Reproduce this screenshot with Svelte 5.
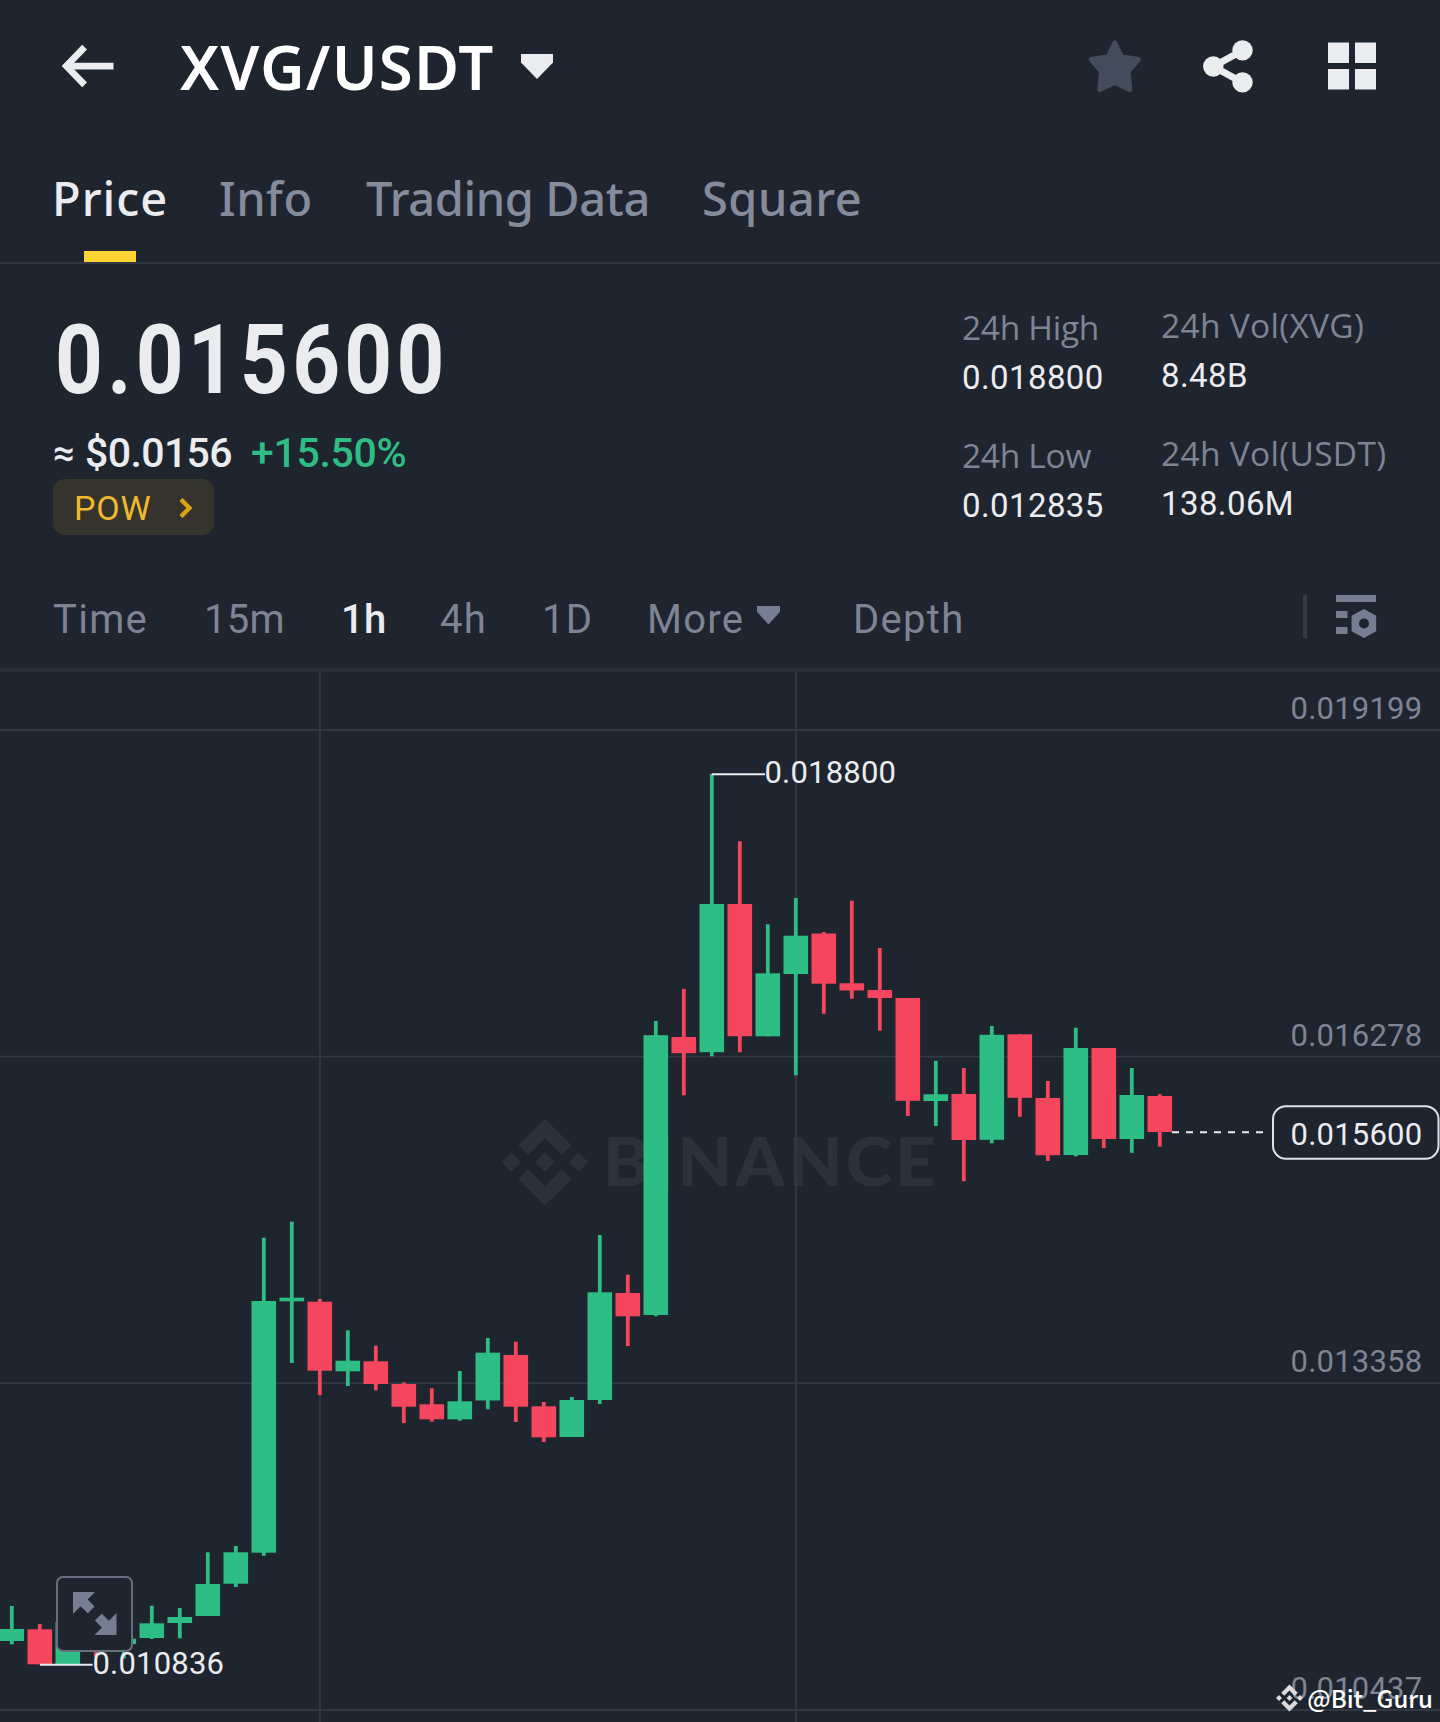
<script lang="ts">
	type Direction = 'up' | 'down';
	// direction, wick top, body top, body bottom, wick bottom
	type Candle = [Direction, number, number, number, number];

	const tabs = ['Price', 'Info', 'Trading Data', 'Square'];
	const intervals = ['Time', '15m', '1h', '4h', '1D'];

	let activeTab = $state('Price');
	let activeInterval = $state('1h');

	const stats = [
		[
			{ label: '24h High', value: '0.018800' },
			{ label: '24h Low', value: '0.012835' }
		],
		[
			{ label: '24h Vol(XVG)', value: '8.48B' },
			{ label: '24h Vol(USDT)', value: '138.06M' }
		]
	];

	const CHART_TOP = 672;
	const STEP = 28;
	const FIRST_X = 11.8;
	const BODY_WIDTH = 24.6;

	const gridX = [320, 796];
	const gridY = [
		{ y: 730, label: '0.019199' },
		{ y: 1056.7, label: '0.016278' },
		{ y: 1383.2, label: '0.013358' },
		{ y: 1710, label: '0.010437' }
	];

	const candles: Candle[] = [
		['up', 1606, 1629, 1641, 1644.3],
		['down', 1624, 1629.3, 1664.3, 1664.3],
		['up', 1620.7, 1622, 1664, 1664],
		['down', 1640, 1644, 1650, 1656.5],
		['up', 1630, 1638.7, 1644, 1658.5],
		['up', 1605.7, 1623.3, 1638, 1639],
		['up', 1608, 1617, 1623, 1638.3],
		['up', 1552.3, 1584, 1616, 1616],
		['up', 1546, 1552.3, 1583.7, 1587],
		['up', 1237.7, 1301, 1552.7, 1555.8],
		['up', 1221.7, 1297.7, 1301.3, 1363],
		['down', 1299, 1301.7, 1370.7, 1395],
		['up', 1330.3, 1360.7, 1371.3, 1386],
		['down', 1345.7, 1361.3, 1384, 1390.3],
		['down', 1382.5, 1384, 1406.7, 1423],
		['down', 1388.3, 1404.3, 1419.3, 1421.7],
		['up', 1371, 1401.3, 1419.3, 1420.7],
		['up', 1338, 1352.7, 1400.5, 1409.3],
		['down', 1341.7, 1355, 1406.7, 1422],
		['down', 1402, 1406.3, 1437.3, 1442],
		['up', 1397, 1400, 1437, 1437],
		['up', 1235, 1292.3, 1400, 1404],
		['down', 1274.7, 1293, 1316.3, 1346],
		['up', 1021, 1035.2, 1315, 1316.3],
		['down', 989, 1037, 1053.2, 1095.3],
		['up', 774, 904, 1052.2, 1056.3],
		['down', 841.3, 904, 1036.2, 1052.3],
		['up', 924.3, 973.3, 1036.3, 1036.3],
		['up', 898, 935.7, 974, 1075.3],
		['down', 932, 933.5, 983.7, 1013.7],
		['down', 900.7, 983.3, 990.5, 998.7],
		['down', 948, 990, 998, 1030.7],
		['down', 998, 998, 1100.8, 1116],
		['up', 1060.8, 1094.3, 1101, 1126],
		['down', 1068, 1094, 1140, 1181.2],
		['up', 1026, 1034.8, 1139.8, 1143.3],
		['down', 1034.3, 1034.3, 1097.8, 1116.8],
		['down', 1081, 1098, 1155.2, 1161],
		['up', 1027.8, 1048, 1155, 1156.3],
		['down', 1048, 1048, 1139, 1148.2],
		['up', 1068, 1095, 1139, 1152.8],
		['down', 1094.2, 1096, 1132, 1146.5]
	];

	const centerX = (index: number) => FIRST_X + STEP * index;
</script>

{#snippet logo()}
	<path d="M43.3 0 69.8 26.4 60 36 43.3 19.4 26.6 36 16.8 26.4Z" />
	<path d="M43.3 86.6 69.8 60.2 60 50.6 43.3 67.2 26.6 50.6 16.8 60.2Z" />
	<path d="M43.3 33.7 52.9 43.3 43.3 52.9 33.7 43.3Z" />
	<path d="M9.7 33.6 19.3 43.3 9.7 53 0 43.3Z" />
	<path d="M76.9 33.6 86.6 43.3 76.9 53 67.3 43.3Z" />
{/snippet}

<main class="screen">
	<header class="topbar">
		<button class="icon-button" aria-label="Back">
			<svg width="54" height="44" viewBox="0 0 54 44" fill="none" stroke="#eaecef" stroke-width="6.8">
				<path d="M23.6 3.2 5.4 22 23.6 40.8" />
				<path d="M6 22.2H52.5" />
			</svg>
		</button>
		<button class="pair">
			<span class="pair-name">XVG/USDT</span>
			<svg class="pair-caret" width="32" height="25" viewBox="0 0 32 25">
				<path d="M0 0H32V8.4L16 25 0 8.4Z" fill="#eaecef" />
			</svg>
		</button>
		<div class="actions">
			<button class="icon-button" aria-label="Favorite">
				<svg width="54" height="53" viewBox="0 0 54 53">
					<path
						d="M26.8 2.8 33.3 16.8 50.4 19.4 40.2 31.4 41.7 49.6 26.8 42.4 11.9 49.6 13.4 31.4 3.2 19.4 20.3 16.8Z"
						fill="#434c5a"
						stroke="#434c5a"
						stroke-width="5"
						stroke-linejoin="round"
					/>
				</svg>
			</button>
			<button class="icon-button share" aria-label="Share">
				<svg width="50" height="53" viewBox="0 0 50 53" fill="#eaecef">
					<path d="M39.5 10.5 10.3 26.5 39.5 42.5" fill="none" stroke="#eaecef" stroke-width="7" />
					<circle cx="10.3" cy="26.5" r="10.2" />
					<circle cx="39.5" cy="10.4" r="10.2" />
					<circle cx="39.5" cy="42.4" r="10.2" />
				</svg>
			</button>
			<button class="icon-button" aria-label="Menu">
				<svg width="48" height="48" viewBox="0 0 48 48" fill="#eaecef">
					<path d="M0 .6H21V21H0ZM27 .6H48V21H27ZM0 27H21V47.4H0ZM27 27H48V47.4H27Z" />
				</svg>
			</button>
		</div>
	</header>

	<nav class="tabs">
		{#each tabs as tab}
			<button class="tab" class:active={tab === activeTab} onclick={() => (activeTab = tab)}>
				{tab}
			</button>
		{/each}
	</nav>

	<section class="summary">
		<div class="quote">
			<div class="last-price">0.015600</div>
			<div class="fiat">
				<span class="approx">≈</span>
				<span class="usd">$0.0156</span>
				<span class="change">+15.50%</span>
			</div>
			<button class="tag">
				<span>POW</span>
				<svg width="14" height="20" viewBox="0 0 14 20" fill="none" stroke="#d9a514" stroke-width="4.4">
					<path d="M2 1.5 10.4 10 2 18.5" />
				</svg>
			</button>
		</div>
		<div class="stats">
			{#each stats as column}
				<dl class="stat-column">
					{#each column as stat}
						<div class="stat">
							<dt>{stat.label}</dt>
							<dd>{stat.value}</dd>
						</div>
					{/each}
				</dl>
			{/each}
		</div>
	</section>

	<div class="intervals">
		{#each intervals as interval}
			<button
				class="interval"
				class:active={interval === activeInterval}
				onclick={() => (activeInterval = interval)}
			>
				{interval}
			</button>
		{/each}
		<button class="interval more">
			<span class="more-label">More</span>
			<svg width="23" height="19" viewBox="0 0 23 19">
				<path d="M0 0H23V5.8L11.5 18.5 0 5.8Z" fill="#767f92" />
			</svg>
		</button>
		<button class="interval depth">Depth</button>
		<span class="divider"></span>
		<button class="icon-button" aria-label="Chart settings">
			<svg width="41" height="43" viewBox="0 0 41 43" fill="#767f92">
				<path d="M0 0H40V7H0ZM0 16H11.5V23H0ZM0 32H11.5V39H0Z" />
				<path
					fill-rule="evenodd"
					d="M28 14 40.2 20.8V36.2L28 43 15.6 36.2V20.8ZM28 23.4A5.1 5.1 0 1 0 28 33.6 5.1 5.1 0 1 0 28 23.4Z"
				/>
			</svg>
		</button>
	</div>

	<section class="chart">
		<svg width="1440" height="1050" viewBox="0 {CHART_TOP} 1440 1050">
			<g class="watermark">
				<g transform="translate(501.6 1118.8)">{@render logo()}</g>
				<text x="603" y="1186" textLength="336" lengthAdjust="spacingAndGlyphs">BINANCE</text>
			</g>

			<g class="grid">
				{#each gridX as x}
					<line x1={x} x2={x} y1={CHART_TOP} y2="1722" />
				{/each}
				{#each gridY as line}
					<line x1="0" x2="1440" y1={line.y} y2={line.y} />
				{/each}
			</g>

			{#each gridY as line}
				<text class="axis" x="1290.6" y={line.y - 10.8}>{line.label}</text>
			{/each}

			{#each candles as [direction, high, top, bottom, low], i}
				<g class={direction}>
					<rect x={centerX(i) - 1.9} y={high} width="3.8" height={low - high} />
					<rect x={centerX(i) - BODY_WIDTH / 2} y={top} width={BODY_WIDTH} height={bottom - top} />
				</g>
			{/each}

			<!-- high / low callouts -->
			<path class="callout" d="M711.8 774.2H765" />
			<text class="callout-label" x="764.4" y="782.8">0.018800</text>
			<path class="callout" d="M40 1664.8H92.5" />
			<text class="callout-label" x="92.4" y="1673.8">0.010836</text>

			<!-- last price -->
			<path class="last-line" d="M1172 1132.3H1264" />
			<rect class="last-box" x="1273" y="1106.2" width="165.5" height="52.6" rx="13" />
			<text class="callout-label" x="1290.6" y="1145">0.015600</text>
		</svg>

		<button class="expand" aria-label="Full screen">
			<svg width="44" height="44" viewBox="0 0 44 44" fill="#767f92">
				<path d="M0 0H22L14.6 7.4 21.6 14.4 14.8 21.2 7.6 14.2 0 22Z" />
				<path d="M43.5 43H21.5L28.9 35.6 21.9 28.6 28.7 21.8 35.9 28.8 43.5 21Z" />
			</svg>
		</button>

		<div class="author">
			<svg width="27" height="28" viewBox="0 0 86.6 86.6" fill="#dcdcdc">{@render logo()}</svg>
			<span>@Bit_Guru</span>
		</div>
	</section>
</main>

<style>
	:global(body) {
		background: #1f252f;
	}

	.screen {
		width: 1440px;
		height: 1722px;
		overflow: hidden;
		background: #1f252f;
		color: #eaecef;
		font-family: Roboto, sans-serif;
	}

	button {
		padding: 0;
		border: none;
		background: none;
		color: inherit;
		font: inherit;
		text-align: left;
		white-space: nowrap;
		cursor: pointer;
	}

	svg {
		display: block;
	}

	.topbar {
		display: flex;
		align-items: center;
		height: 132px;
		padding: 0 64px 0 61px;
	}

	.pair {
		display: flex;
		align-items: center;
		margin-left: 65px;
		gap: 26px;
	}

	.pair-name {
		width: 315px;
		font-family: 'Noto Sans', sans-serif;
		font-size: 61.6px;
		font-weight: 600;
		line-height: 132px;
		letter-spacing: 1.2px;
		color: #fff;
	}

	.actions {
		display: flex;
		align-items: center;
		margin-left: auto;
	}

	.share {
		margin: 0 75px 0 61px;
	}

	.tabs {
		display: grid;
		grid-template-columns: 167px 147px 336px auto;
		box-sizing: border-box;
		height: 132px;
		padding-left: 52px;
		border-bottom: 2px solid #323843;
		justify-content: start;
	}

	.tab {
		position: relative;
		justify-self: start;
		padding-top: 2px;
		font-family: 'Noto Sans', sans-serif;
		font-size: 47px;
		font-weight: 500;
		line-height: 128px;
		letter-spacing: 0.5px;
		color: #848c9b;
	}

	.tab:nth-child(1) {
		letter-spacing: 1px;
	}

	.tab:nth-child(3) {
		letter-spacing: -0.4px;
	}

	.tab.active {
		color: #eaecef;
	}

	.tab.active::after {
		content: '';
		position: absolute;
		bottom: 0;
		left: 50%;
		width: 52px;
		height: 11px;
		margin-left: -26px;
		background: #fcd535;
	}

	.summary {
		display: flex;
		justify-content: space-between;
		height: 306px;
		padding-left: 53px;
	}

	.quote {
		padding-top: 51px;
	}

	.last-price {
		width: 400px;
		margin-left: 2px;
		font-size: 97px;
		font-weight: 700;
		line-height: 91px;
		letter-spacing: 5px;
		transform: scaleX(0.86);
		transform-origin: left;
	}

	.fiat {
		display: flex;
		margin-top: 22px;
		font-size: 41px;
		font-weight: 500;
		line-height: 50px;
	}

	.approx {
		width: 32px;
		font-size: 38px;
	}

	.usd {
		width: 166px;
		letter-spacing: -0.6px;
	}

	.change {
		color: #2ebd85;
		letter-spacing: -0.3px;
	}

	.tag {
		display: flex;
		align-items: center;
		justify-content: space-between;
		box-sizing: border-box;
		width: 161px;
		height: 56px;
		margin-top: 1px;
		padding: 1px 21px 0 21px;
		border-radius: 12px;
		background: #35342c;
		color: #f0b92d;
		font-size: 34px;
		letter-spacing: 0.8px;
	}

	.stats {
		display: grid;
		grid-template-columns: 199px 279px;
	}

	.stat-column {
		display: flex;
		flex-direction: column;
		gap: 26px;
		margin: 37px 0 0;
	}

	.stat-column + .stat-column {
		margin-top: 35px;
	}

	dt {
		font-family: 'Open Sans', sans-serif;
		font-size: 33.5px;
		line-height: 52px;
		letter-spacing: -0.3px;
		color: #7d8493;
		white-space: nowrap;
	}

	.stat-column + .stat-column dt {
		letter-spacing: 0.3px;
	}

	dd {
		margin: 0;
		font-size: 33px;
		line-height: 50px;
		letter-spacing: 0.4px;
	}

	.intervals {
		display: grid;
		grid-template-columns: 151px 137px 99px 102px 105px 206px auto 33px 104px;
		align-items: center;
		box-sizing: border-box;
		height: 102px;
		padding-left: 53px;
		border-bottom: 4px solid #292e39;
	}

	.interval {
		padding-top: 2px;
		font-size: 40px;
		line-height: 96px;
		letter-spacing: 1.3px;
		color: #7d8493;
	}

	.interval:nth-child(2),
	.interval:nth-child(3) {
		letter-spacing: 0.3px;
	}

	.interval.active {
		color: #eaecef;
		font-weight: 500;
	}

	.more {
		display: flex;
		align-items: center;
	}

	.more-label {
		width: 110px;
	}

	.more svg {
		margin-top: -9px;
	}

	.divider {
		width: 4px;
		height: 43px;
		margin-top: -6px;
		background: #343a46;
	}

	.intervals .icon-button {
		margin-top: -5px;
	}

	.chart {
		position: relative;
	}

	.grid line {
		stroke: #333944;
		stroke-width: 1.8;
	}

	.watermark {
		fill: #2c313c;
	}

	.watermark text {
		font-family: Lato, sans-serif;
		font-size: 66px;
		font-weight: 900;
		letter-spacing: 3px;
	}

	.axis,
	.callout-label {
		font-size: 31px;
		letter-spacing: 0.2px;
	}

	.axis {
		fill: #7d8493;
	}

	.callout-label {
		fill: #eaecef;
	}

	.callout {
		stroke: #eaecef;
		stroke-width: 2;
	}

	.up {
		fill: #2ebd85;
	}

	.down {
		fill: #f6465d;
	}

	.last-line {
		stroke: #eaecef;
		stroke-width: 2;
		stroke-dasharray: 7 7;
	}

	.last-box {
		fill: #1f252f;
		stroke: #dfe2e7;
		stroke-width: 2;
	}

	.expand {
		position: absolute;
		top: 903.5px;
		left: 56px;
		display: flex;
		align-items: center;
		justify-content: center;
		box-sizing: border-box;
		width: 77px;
		height: 76.5px;
		border: 2px solid #666e7f;
		border-radius: 7px;
		background: #1f252f;
	}

	.author {
		position: absolute;
		right: 7px;
		bottom: 6.5px;
		display: flex;
		align-items: center;
		gap: 4px;
		color: #fff;
		font-family: 'Noto Sans CJK SC', sans-serif;
		font-size: 24px;
		font-weight: 500;
		line-height: 36px;
	}
</style>
